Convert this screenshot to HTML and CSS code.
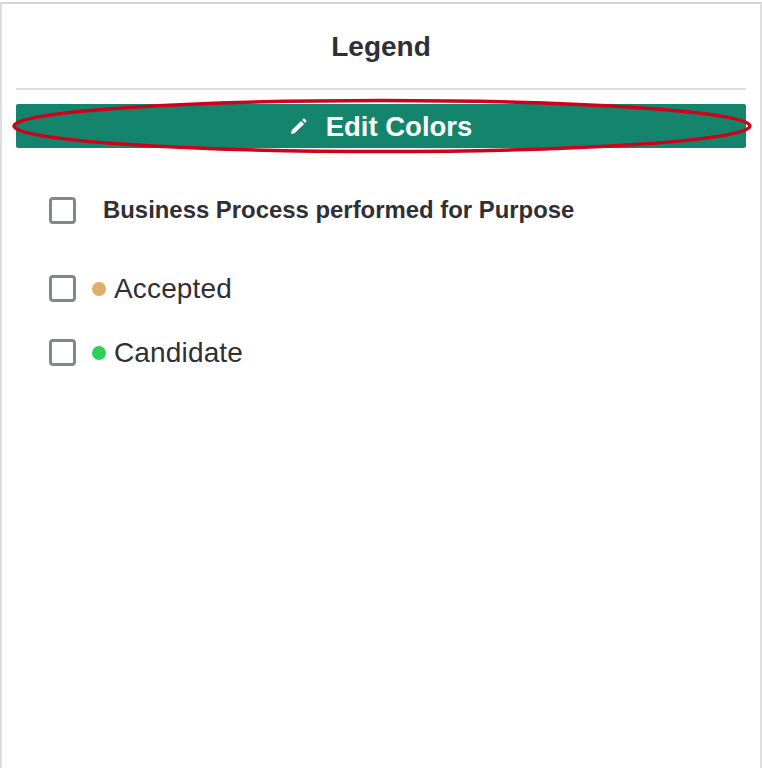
FILE: index.html
```html
<!DOCTYPE html>
<html lang="en">
<head>
    <meta charset="UTF-8">
    <meta name="viewport" content="width=device-width, initial-scale=1.0">
    <title>Legend</title>
    <link rel="stylesheet" href="styles.css">
</head>
<body>
    <div class="panel">
        <div class="header">
            <h1>Legend</h1>
        </div>
        <div class="edit-wrap">
            <button class="edit-btn" type="button">
                <svg class="edit-icon" viewBox="0 0 16 16" width="17" height="17">
                    <path d="M1 15l.6-3.4L10.4 2.8l2.8 2.8L4.4 14.4z M11.4 1.8l1-1a1 1 0 0 1 1.4 0l1.4 1.4a1 1 0 0 1 0 1.4l-1 1z" fill="#fff"/>
                </svg>
                <span class="edit-label">Edit Colors</span>
            </button>
            <!-- red annotation round the button -->
            <svg class="annotation" viewBox="0 0 742 56" width="742" height="56">
                <ellipse cx="372" cy="28" rx="368" ry="25.5" fill="none" stroke="#d0021b" stroke-width="3.5"/>
            </svg>
        </div>
        <div class="legend">
            <div class="legend-title">
                <span class="check"></span>
                <strong>Business Process performed for Purpose</strong>
            </div>
            <div class="legend-item">
                <span class="check"></span>
                <span class="dot dot-accepted"></span>
                <span class="item-label">Accepted</span>
            </div>
            <div class="legend-item">
                <span class="check"></span>
                <span class="dot dot-candidate"></span>
                <span class="item-label">Candidate</span>
            </div>
        </div>
    </div>
</body>
</html>
```

FILE: styles.css
```css
html, body {
    height: 100%;
}
body {
    margin: 0;
    padding-top: 2px;
    box-sizing: border-box;
    overflow: hidden;
    background: #fff;
    font-family: "Liberation Sans", Arial, sans-serif;
    color: #2e3035;
}
.panel {
    height: 766px;
    box-sizing: border-box;
    border: 2px solid #dedede;
    border-top-color: #d4d4d4;
    border-bottom: 0;
    padding: 0 14px;
}
.header {
    height: 84px;
    border-bottom: 2px solid #dedede;
    text-align: center;
}
.header h1 {
    margin: 0;
    padding-top: 26px;
    font-size: 28px;
    line-height: 34px;
    font-weight: bold;
}
.edit-wrap {
    position: relative;
    margin-top: 14px;
}
.edit-btn {
    display: flex;
    align-items: center;
    justify-content: center;
    gap: 19px;
    width: 100%;
    height: 44px;
    padding: 0;
    border: 0;
    border-radius: 2px;
    background: #15846c;
    color: #fff;
    font-family: inherit;
    font-size: 27.5px;
    font-weight: bold;
}
.edit-label {
    position: relative;
    top: 1px;
}
.edit-icon {
    flex: none;
}
.annotation {
    position: absolute;
    left: -6px;
    top: -6px;
}
.legend {
    padding: 48px 0 0 33px;
}
.legend-title {
    display: flex;
    align-items: center;
    gap: 27px;
    height: 28px;
    margin-bottom: 50px;
    font-size: 23.9px;
}
.legend-item {
    display: flex;
    align-items: center;
    height: 28px;
    margin-bottom: 36px;
    font-size: 28px;
    letter-spacing: 0.15px;
}
.item-label {
    position: relative;
    top: 1px;
}
.check {
    flex: none;
    width: 27px;
    height: 27px;
    box-sizing: border-box;
    border: 3px solid #85888b;
    border-radius: 4px;
    background: #fff;
}
.dot {
    flex: none;
    width: 14px;
    height: 14px;
    margin: 2px 8px 0 16px;
    border-radius: 50%;
}
.dot-accepted {
    background: #dfae68;
}
.dot-candidate {
    background: #2ed158;
}
```
